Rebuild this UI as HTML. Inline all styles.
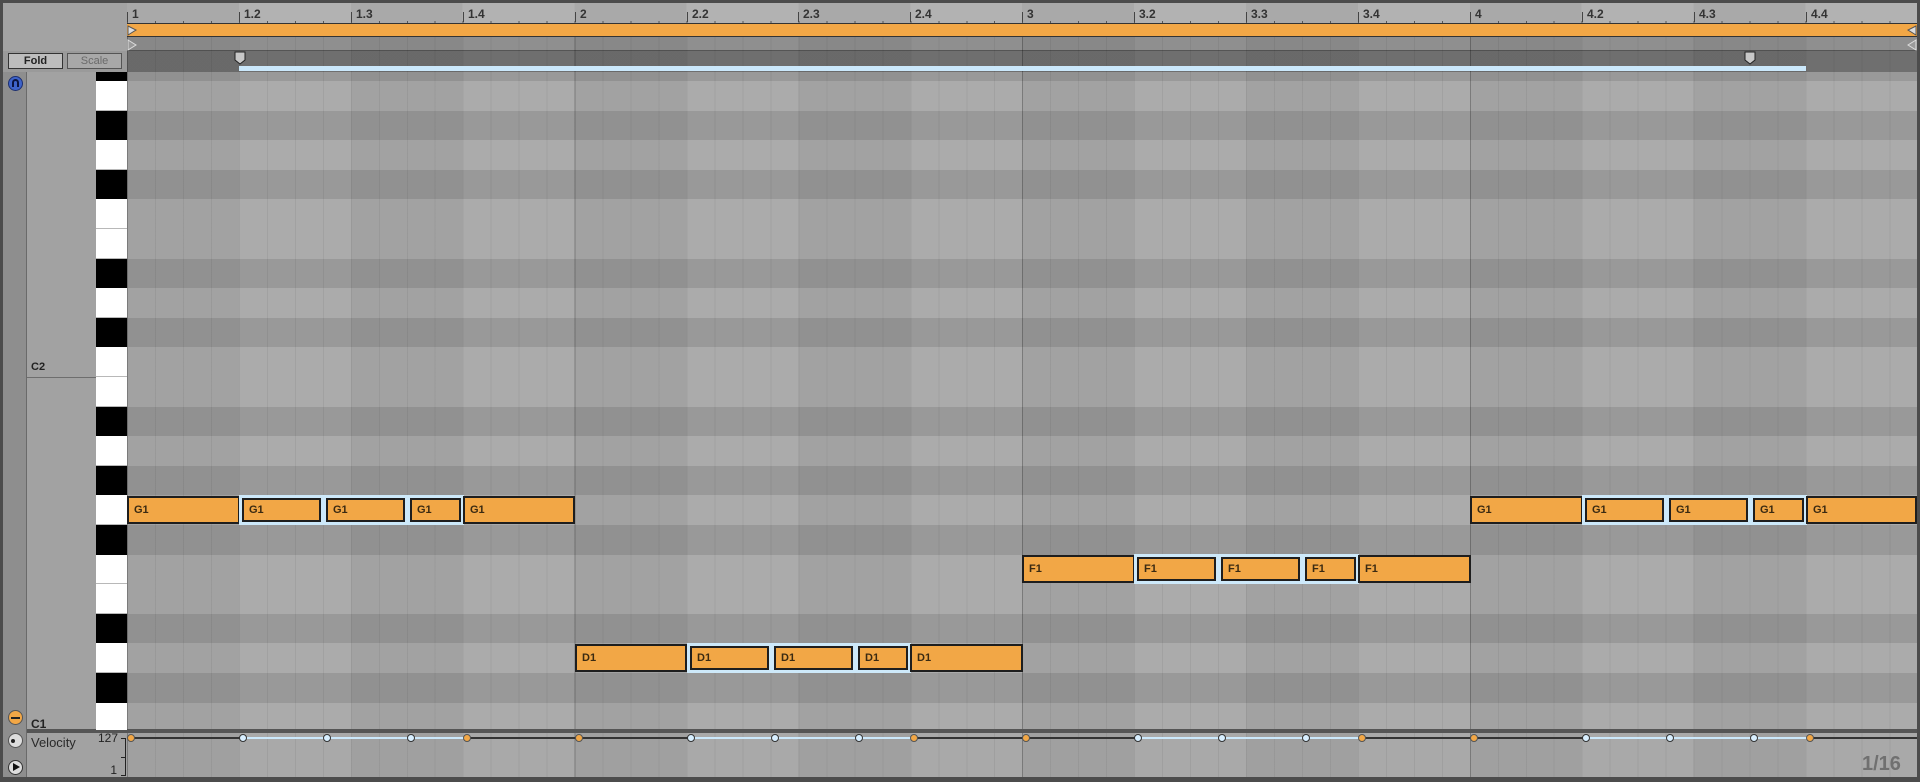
<!DOCTYPE html>
<html><head><meta charset="utf-8"><style>
*{margin:0;padding:0;box-sizing:border-box}
body{width:1920px;height:782px;background:#4c4c4c;position:relative;overflow:hidden;font-family:"Liberation Sans",sans-serif}
.a{position:absolute}
.w{background:#ababab}.b{background:#999}
.k{position:absolute;left:96px;width:31px}
.kw{background:#fff;border-bottom:1px solid #b8b8b8}.kb{background:#000}
.cols{position:absolute;left:127px;width:1790px;pointer-events:none;
background:
repeating-linear-gradient(90deg,rgba(0,0,0,.2) 0 1px,transparent 1px 447.6px),
repeating-linear-gradient(90deg,rgba(0,0,0,.06) 0 1px,transparent 1px 27.975px),
repeating-linear-gradient(90deg,rgba(0,0,0,.05) 0 111.9px,transparent 111.9px 223.8px);}
.n{position:absolute;background:#f2a746;border:2px solid #1e1e1e;font-size:11px;font-weight:bold;color:#3a2a12;padding-left:5px;line-height:24px;height:28px}
.sel{position:absolute;background:#cde9fa;height:30px}
.sel .n{height:24px;top:3px;line-height:20px}
.rl{position:absolute;top:7px;font-size:12px;color:#333;font-weight:bold}
.tk{position:absolute;top:12px;width:1px;height:10px;background:#444}
.lab{position:absolute;font-size:11px;color:#222;font-weight:bold}
</style></head><body>
<!-- left panel -->
<div class="a" style="left:3px;top:3px;width:124px;height:48px;background:#a3a3a3"></div>
<div class="a" style="left:3px;top:51px;width:124px;height:21px;background:#9a9a9a"></div>
<div class="a" style="left:8px;top:53px;width:55px;height:16px;background:#bdbdbd;border:1px solid #333;font-size:11px;font-weight:bold;text-align:center;line-height:14px;color:#222">Fold</div>
<div class="a" style="left:67px;top:53px;width:55px;height:16px;background:#a8a8a8;border:1px solid #555;font-size:11px;text-align:center;line-height:14px;color:#6a6a6a">Scale</div>
<div class="a" style="left:3px;top:72px;width:24px;height:707px;background:#8e8e8e;border-right:1px solid #6a6a6a"></div>
<div class="a" style="left:27px;top:72px;width:69px;height:707px;background:#a2a2a2"></div>
<div class="a" style="left:27px;top:377px;width:69px;height:1px;background:#6e6e6e"></div>
<div class="lab" style="left:31px;top:361px">C2</div>
<div class="lab" style="left:31px;top:717px;font-size:12px">C1</div>

<!-- ruler -->
<div class="a" style="left:127px;top:3px;width:1790px;height:21px;background:repeating-linear-gradient(90deg,#a9a9a9 0 111.9px,#b2b2b2 111.9px 223.8px)"></div>
<div class="a" style="left:127px;top:21px;width:1790px;height:3px;background:repeating-linear-gradient(90deg,#555 0 1px,transparent 1px 27.975px)"></div>
<div class="tk" style="left:127px"></div><div class="rl" style="left:132px">1</div>
<div class="tk" style="left:239px"></div><div class="rl" style="left:244px">1.2</div>
<div class="tk" style="left:351px"></div><div class="rl" style="left:356px">1.3</div>
<div class="tk" style="left:463px"></div><div class="rl" style="left:468px">1.4</div>
<div class="tk" style="left:575px"></div><div class="rl" style="left:580px">2</div>
<div class="tk" style="left:687px"></div><div class="rl" style="left:692px">2.2</div>
<div class="tk" style="left:798px"></div><div class="rl" style="left:803px">2.3</div>
<div class="tk" style="left:910px"></div><div class="rl" style="left:915px">2.4</div>
<div class="tk" style="left:1022px"></div><div class="rl" style="left:1027px">3</div>
<div class="tk" style="left:1134px"></div><div class="rl" style="left:1139px">3.2</div>
<div class="tk" style="left:1246px"></div><div class="rl" style="left:1251px">3.3</div>
<div class="tk" style="left:1358px"></div><div class="rl" style="left:1363px">3.4</div>
<div class="tk" style="left:1470px"></div><div class="rl" style="left:1475px">4</div>
<div class="tk" style="left:1582px"></div><div class="rl" style="left:1587px">4.2</div>
<div class="tk" style="left:1694px"></div><div class="rl" style="left:1699px">4.3</div>
<div class="tk" style="left:1806px"></div><div class="rl" style="left:1811px">4.4</div>
<!-- orange bar -->
<div class="a" style="left:127px;top:23px;width:1790px;height:14px;background:#f2a746;border-top:1px solid #333;border-bottom:1px solid #333"></div>
<div class="a" style="left:127px;top:37px;width:1790px;height:14px;background:#8f8f8f;border-bottom:1px solid #555"></div>
<div class="cols" style="top:37px;height:14px"></div>
<svg class="a" style="left:127px;top:24px" width="1790" height="28">
<path d="M1 2 L9 6 L1 11Z" fill="#ddd" stroke="#555"/>
<path d="M1 16 L9 21 L1 26Z" fill="#9a9a9a" stroke="#ddd"/>
<path d="M1789 2 L1781 6 L1789 11Z" fill="#ddd" stroke="#555"/>
<path d="M1789 16 L1781 21 L1789 26Z" fill="#9a9a9a" stroke="#ddd"/>
</svg>
<!-- fold row -->
<div class="a" style="left:127px;top:51px;width:1790px;height:21px;background:#6f6f6f"></div>
<div class="cols" style="top:51px;height:21px"></div>
<div class="a" style="left:239px;top:66px;width:1567px;height:5px;background:#cbe8fb"></div>
<svg class="a" style="left:230px;top:51px" width="1530" height="20">
<path d="M5 1 H15 V9 L10 13 L5 9Z" fill="#c8c8c8" stroke="#222"/>
<path d="M1515 1 H1525 V9 L1520 13 L1515 9Z" fill="#c8c8c8" stroke="#222"/>
</svg>

<!-- grid rows -->
<div class="a b" style="left:127px;top:72px;width:1790px;height:9px"></div>
<div class="a w" style="left:127px;top:81px;width:1790px;height:29.6px"></div>
<div class="a b" style="left:127px;top:110.6px;width:1790px;height:29.6px"></div>
<div class="a w" style="left:127px;top:140.2px;width:1790px;height:29.6px"></div>
<div class="a b" style="left:127px;top:169.8px;width:1790px;height:29.6px"></div>
<div class="a w" style="left:127px;top:199.4px;width:1790px;height:29.6px"></div>
<div class="a w" style="left:127px;top:229px;width:1790px;height:29.6px"></div>
<div class="a b" style="left:127px;top:258.6px;width:1790px;height:29.6px"></div>
<div class="a w" style="left:127px;top:288.2px;width:1790px;height:29.6px"></div>
<div class="a b" style="left:127px;top:317.8px;width:1790px;height:29.6px"></div>
<div class="a w" style="left:127px;top:347.4px;width:1790px;height:29.6px"></div>
<div class="a w" style="left:127px;top:377px;width:1790px;height:29.6px"></div>
<div class="a b" style="left:127px;top:406.6px;width:1790px;height:29.6px"></div>
<div class="a w" style="left:127px;top:436.2px;width:1790px;height:29.6px"></div>
<div class="a b" style="left:127px;top:465.8px;width:1790px;height:29.6px"></div>
<div class="a w" style="left:127px;top:495.4px;width:1790px;height:29.6px"></div>
<div class="a b" style="left:127px;top:525px;width:1790px;height:29.6px"></div>
<div class="a w" style="left:127px;top:554.6px;width:1790px;height:29.6px"></div>
<div class="a w" style="left:127px;top:584.2px;width:1790px;height:29.6px"></div>
<div class="a b" style="left:127px;top:613.8px;width:1790px;height:29.6px"></div>
<div class="a w" style="left:127px;top:643.4px;width:1790px;height:29.6px"></div>
<div class="a b" style="left:127px;top:673px;width:1790px;height:29.6px"></div>
<div class="a w" style="left:127px;top:702.6px;width:1790px;height:27px"></div>
<div class="a" style="left:127px;top:733px;width:1790px;height:44px;background:#a9a9a9"></div>
<div class="cols" style="top:72px;height:658px"></div>
<div class="cols" style="top:733px;height:44px"></div>
<div class="a" style="left:27px;top:729px;width:1893px;height:4px;background:#555"></div>
<div class="a" style="left:27px;top:733px;width:100px;height:44px;background:#a2a2a2"></div>
<div class="a" style="left:3px;top:729px;width:24px;height:48px;background:#8e8e8e;border-right:1px solid #6a6a6a"></div>
<div class="a" style="left:0;top:777px;width:1920px;height:5px;background:#4c4c4c"></div>

<!-- icons -->
<div class="a" style="left:8px;top:76px;width:15px;height:15px;border-radius:50%;background:#3e63c9;border:1px solid #1b2e70"></div>
<div class="a" style="left:12px;top:79px;width:7px;height:8px;border:2px solid #0b1440;border-bottom:none;border-radius:4px 4px 0 0"></div>
<div class="a" style="left:8px;top:710px;width:15px;height:15px;border-radius:50%;background:#f2a746;border:1px solid #555"></div>
<div class="a" style="left:11px;top:717px;width:9px;height:2px;background:#222"></div>
<div class="a" style="left:8px;top:733px;width:15px;height:15px;border-radius:50%;background:#ddd;border:1px solid #555"></div>
<div class="a" style="left:11px;top:739px;width:4px;height:4px;border-radius:50%;background:#222"></div>
<div class="a" style="left:8px;top:760px;width:15px;height:15px;border-radius:50%;background:#ddd;border:1px solid #333"></div>
<div class="a" style="left:13px;top:763px;width:0;height:0;border-left:7px solid #111;border-top:4.5px solid transparent;border-bottom:4.5px solid transparent"></div>
<div class="lab" style="left:31px;top:735px;font-size:13px;font-weight:normal;color:#2a2a2a">Velocity</div>
<div class="lab" style="left:80px;width:38px;text-align:right;top:731px;font-size:12px;font-weight:normal;color:#222">127</div>
<div class="lab" style="left:80px;width:37px;text-align:right;top:763px;font-size:12px;font-weight:normal;color:#222">1</div>
<div class="a" style="left:125px;top:738px;width:1px;height:38px;background:#222"></div>
<div class="a" style="left:121px;top:738px;width:4px;height:1px;background:#222"></div>
<div class="a" style="left:121px;top:757px;width:4px;height:1px;background:#222"></div>
<div class="a" style="left:121px;top:775px;width:4px;height:1px;background:#222"></div>

<!-- keys -->
<div class="k kb" style="top:72px;height:9px"></div>
<div class="k kw" style="top:81px;height:29.6px"></div>
<div class="k kb" style="top:110.6px;height:29.6px"></div>
<div class="k kw" style="top:140.2px;height:29.6px"></div>
<div class="k kb" style="top:169.8px;height:29.6px"></div>
<div class="k kw" style="top:199.4px;height:29.6px"></div>
<div class="k kw" style="top:229px;height:29.6px"></div>
<div class="k kb" style="top:258.6px;height:29.6px"></div>
<div class="k kw" style="top:288.2px;height:29.6px"></div>
<div class="k kb" style="top:317.8px;height:29.6px"></div>
<div class="k kw" style="top:347.4px;height:29.6px"></div>
<div class="k kw" style="top:377px;height:29.6px"></div>
<div class="k kb" style="top:406.6px;height:29.6px"></div>
<div class="k kw" style="top:436.2px;height:29.6px"></div>
<div class="k kb" style="top:465.8px;height:29.6px"></div>
<div class="k kw" style="top:495.4px;height:29.6px"></div>
<div class="k kb" style="top:525px;height:29.6px"></div>
<div class="k kw" style="top:554.6px;height:29.6px"></div>
<div class="k kw" style="top:584.2px;height:29.6px"></div>
<div class="k kb" style="top:613.8px;height:29.6px"></div>
<div class="k kw" style="top:643.4px;height:29.6px"></div>
<div class="k kb" style="top:673px;height:29.6px"></div>
<div class="k kw" style="top:702.6px;height:27px;border:none"></div>

<!-- notes bar 1 G1 -->
<div class="n" style="left:127px;top:496px;width:113px">G1</div>
<div class="sel" style="left:239px;top:495px;width:225px">
 <div class="n" style="left:3px;width:79px">G1</div>
 <div class="n" style="left:87px;width:79px">G1</div>
 <div class="n" style="left:171px;width:51px">G1</div>
</div>
<div class="n" style="left:463px;top:496px;width:112px">G1</div>
<!-- bar 2 D1 -->
<div class="n" style="left:575px;top:644px;width:112px">D1</div>
<div class="sel" style="left:687px;top:643px;width:224px">
 <div class="n" style="left:3px;width:79px">D1</div>
 <div class="n" style="left:87px;width:79px">D1</div>
 <div class="n" style="left:171px;width:50px">D1</div>
</div>
<div class="n" style="left:910px;top:644px;width:113px">D1</div>
<!-- bar 3 F1 -->
<div class="n" style="left:1022px;top:555px;width:113px">F1</div>
<div class="sel" style="left:1134px;top:554px;width:225px">
 <div class="n" style="left:3px;width:79px">F1</div>
 <div class="n" style="left:87px;width:79px">F1</div>
 <div class="n" style="left:171px;width:51px">F1</div>
</div>
<div class="n" style="left:1358px;top:555px;width:113px">F1</div>
<!-- bar 4 G1 -->
<div class="n" style="left:1470px;top:496px;width:113px">G1</div>
<div class="sel" style="left:1582px;top:495px;width:225px">
 <div class="n" style="left:3px;width:79px">G1</div>
 <div class="n" style="left:87px;width:79px">G1</div>
 <div class="n" style="left:171px;width:51px">G1</div>
</div>
<div class="n" style="left:1806px;top:496px;width:111px">G1</div>

<!-- velocity -->
<svg class="a" style="left:0;top:730px" width="1920" height="20">
<g stroke-width="2">
<line x1="131" y1="8" x2="1917" y2="8" stroke="#333"/>
<line x1="243" y1="8" x2="467" y2="8" stroke="#cbe8fb"/>
<line x1="691" y1="8" x2="914" y2="8" stroke="#cbe8fb"/>
<line x1="1138" y1="8" x2="1362" y2="8" stroke="#cbe8fb"/>
<line x1="1586" y1="8" x2="1810" y2="8" stroke="#cbe8fb"/>
</g>
<g fill="#f2a746" stroke="#555">
<circle cx="131" cy="8" r="3.5"/><circle cx="467" cy="8" r="3.5"/>
<circle cx="579" cy="8" r="3.5"/><circle cx="914" cy="8" r="3.5"/>
<circle cx="1026" cy="8" r="3.5"/><circle cx="1362" cy="8" r="3.5"/>
<circle cx="1474" cy="8" r="3.5"/><circle cx="1810" cy="8" r="3.5"/>
</g>
<g fill="#d8efff" stroke="#333">
<circle cx="243" cy="8" r="3.5"/><circle cx="327" cy="8" r="3.5"/><circle cx="411" cy="8" r="3.5"/>
<circle cx="691" cy="8" r="3.5"/><circle cx="775" cy="8" r="3.5"/><circle cx="859" cy="8" r="3.5"/>
<circle cx="1138" cy="8" r="3.5"/><circle cx="1222" cy="8" r="3.5"/><circle cx="1306" cy="8" r="3.5"/>
<circle cx="1586" cy="8" r="3.5"/><circle cx="1670" cy="8" r="3.5"/><circle cx="1754" cy="8" r="3.5"/>
</g>
</svg>
<div class="a" style="left:1862px;top:753px;font-size:20px;font-weight:bold;color:#707070">1/16</div>
<div class="a" style="left:1917px;top:0;width:3px;height:782px;background:#4c4c4c"></div>
<div class="a" style="left:0;top:0;width:3px;height:782px;background:#4c4c4c"></div>
<div class="a" style="left:0;top:0;width:1920px;height:3px;background:#4c4c4c"></div>
</body></html>
